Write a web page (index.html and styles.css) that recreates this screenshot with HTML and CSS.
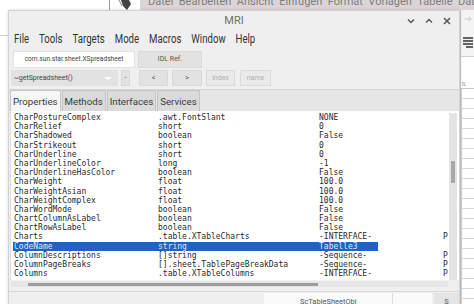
FILE: index.html
```html
<!DOCTYPE html>
<html>
<head>
<meta charset="utf-8">
<link rel="stylesheet" href="styles.css">
</head>
<body>
<div class="desktop">
  <div class="calc-top">
    <div class="calc-blank"></div>
    <div class="calc-icon">
      <svg width="16" height="10" viewBox="0 0 16 10"><path d="M4 0 L12 0 L14 4 L10 10 L6 6 Z" fill="#444"/><path d="M2 0 L5 6" stroke="#888" stroke-width="1"/></svg>
    </div>
    <div class="calc-menu"><span>Datei&nbsp;&nbsp;Bearbeiten&nbsp;&nbsp;Ansicht&nbsp;&nbsp;Einfügen&nbsp;&nbsp;Format&nbsp;&nbsp;Vorlagen&nbsp;&nbsp;Tabelle&nbsp;&nbsp;Daten</span></div>
  </div>
  <div class="calc-body">
    <div class="calc-left"></div>
    <div class="calc-mid"></div>
    <div class="calc-right">
      <div class="cr-arrow">➔</div>
      <div class="cr-icon">
        <svg width="10" height="12" viewBox="0 0 10 12"><path d="M0 1h10M0 4h10M0 7h10M3 10h7" stroke="#333" stroke-width="1.6"/></svg>
      </div>
      <div class="cr-box"></div>
      <div class="cr-sort">⇅</div>
      <div class="cr-grid"></div>
    </div>
  </div>

  <div class="mri">
    <div class="titlebar">
      <span class="title">MRI</span>
      <div class="winctl">
        <svg width="8" height="6" viewBox="0 0 8 6"><path d="M1 1.5 L4 4.5 L7 1.5" stroke="#555" stroke-width="1.4" fill="none"/></svg>
        <svg width="8" height="6" viewBox="0 0 8 6"><path d="M1 4.5 L4 1.5 L7 4.5" stroke="#555" stroke-width="1.4" fill="none"/></svg>
        <svg width="8" height="8" viewBox="0 0 8 8"><path d="M1 1 L7 7 M7 1 L1 7" stroke="#555" stroke-width="1.5"/></svg>
      </div>
    </div>
    <div class="menubar">
      <div class="menu-items">
        <span>File</span><span>Tools</span><span>Targets</span><span>Mode</span><span>Macros</span><span>Window</span><span>Help</span>
      </div>
    </div>
    <div class="row1">
      <div class="textbox">com.sun.star.sheet.XSpreadsheet</div>
      <div class="btn idl">IDL Ref.</div>
    </div>
    <div class="row2">
      <div class="combo"><span>~getSpreadsheet()</span><span class="tri"></span></div>
      <div class="btn minus">-</div>
      <div class="btn nav back">&lt;</div>
      <div class="btn nav fwd">&gt;</div>
      <div class="btn dis idx">index</div>
      <div class="btn dis nm">name</div>
    </div>
    <div class="tabs">
      <div class="tab active">Properties</div>
      <div class="tab">Methods</div>
      <div class="tab">Interfaces</div>
      <div class="tab">Services</div>
    </div>
    <div class="listwrap">
      <div class="list">
        <div class="r"><span>CharPostureComplex</span><span>.awt.FontSlant</span><span>NONE</span><span></span><span></span></div>
        <div class="r"><span>CharRelief</span><span>short</span><span>0</span><span></span><span></span></div>
        <div class="r"><span>CharShadowed</span><span>boolean</span><span>False</span><span></span><span></span></div>
        <div class="r"><span>CharStrikeout</span><span>short</span><span>0</span><span></span><span></span></div>
        <div class="r"><span>CharUnderline</span><span>short</span><span>0</span><span></span><span></span></div>
        <div class="r"><span>CharUnderlineColor</span><span>long</span><span>-1</span><span></span><span></span></div>
        <div class="r"><span>CharUnderlineHasColor</span><span>boolean</span><span>False</span><span></span><span></span></div>
        <div class="r"><span>CharWeight</span><span>float</span><span>100.0</span><span></span><span></span></div>
        <div class="r"><span>CharWeightAsian</span><span>float</span><span>100.0</span><span></span><span></span></div>
        <div class="r"><span>CharWeightComplex</span><span>float</span><span>100.0</span><span></span><span></span></div>
        <div class="r"><span>CharWordMode</span><span>boolean</span><span>False</span><span></span><span></span></div>
        <div class="r"><span>ChartColumnAsLabel</span><span>boolean</span><span>False</span><span></span><span></span></div>
        <div class="r"><span>ChartRowAsLabel</span><span>boolean</span><span>False</span><span></span><span></span></div>
        <div class="r"><span>Charts</span><span>.table.XTableCharts</span><span>-INTERFACE-</span><span></span><span>P</span></div>
        <div class="r sel"><span>CodeName</span><span>string</span><span>Tabelle3</span><span></span><span></span></div>
        <div class="r"><span>ColumnDescriptions</span><span>[]string</span><span>-Sequence-</span><span></span><span>P</span></div>
        <div class="r"><span>ColumnPageBreaks</span><span>[].sheet.TablePageBreakData</span><span>-Sequence-</span><span></span><span>P</span></div>
        <div class="r"><span>Columns</span><span>.table.XTableColumns</span><span>-INTERFACE-</span><span></span><span>P</span></div>
      </div>
      <div class="vscroll"><div class="vthumb"></div></div>
    </div>
    <div class="hscroll"><div class="hthumb"></div></div>
    <div class="bottom">
      <div class="st-spacer"></div>
      <div class="st-field main">ScTableSheetObj</div>
      <div class="st-field blank"></div>
      <div class="st-field s">S</div>
    </div>
  </div>
</div>
</body>
</html>
```

FILE: styles.css
```css
* { box-sizing: border-box; }
html, body { margin: 0; padding: 0; }
body { width: 474px; height: 304px; overflow: hidden; font-family: Roboto, "Noto Sans", sans-serif; background: #ffffff; }
.desktop { position: relative; width: 474px; height: 304px; overflow: hidden; }

.calc-top { display: flex; height: 10px; }
.calc-blank { width: 110px; background: #ffffff; border-right: 1px solid #9a9a9a; }
.calc-icon { width: 30px; background: #ffffff; display: flex; justify-content: center; align-items: flex-end; }
.calc-menu { flex: 1; background: #dcd5d8; color: #7d7d7d; font-size: 11px; white-space: nowrap; overflow: hidden; padding-left: 8px; }
.calc-menu span { display: block; line-height: 11px; margin-top: -4px; }

.calc-body { display: flex; height: 294px; }
.calc-left { width: 8px; background: #fff; background-image: linear-gradient(#cfcfcf, #cfcfcf); background-size: 8px 1px; background-position: 0 25px; background-repeat: no-repeat; }
.calc-mid { flex: 1; }
.calc-right { width: 14px; display: flex; flex-direction: column; background: #f4f4f4; border-left: 1px solid #c8c8c8; }
.cr-arrow { height: 18px; font-size: 10px; color: #d4d4d4; padding-left: 3px; line-height: 18px; }
.cr-icon { height: 28px; padding-left: 2px; padding-top: 6px; }
.cr-box { height: 24px; background: #fff; border-top: 1px solid #d0d0d0; }
.cr-sort { height: 8px; font-size: 6px; color: #999; line-height: 8px; background: #fff; }
.cr-grid { flex: 1; background-color: #fff; border-top: 1px solid #c8c8c8; background-image: repeating-linear-gradient(to bottom, transparent 0, transparent 9px, #d6d6d6 9px, #d6d6d6 10px), linear-gradient(to right, #d0d0d0 0, #d0d0d0 1px, transparent 1px); }

.mri { position: absolute; left: 8px; top: 10px; width: 452px; height: 300px; background: #efefef; border: 1px solid #d2d2d2; box-shadow: 0 0 3px rgba(0,0,0,0.15); display: flex; flex-direction: column; }

.titlebar { height: 18px; position: relative; display: flex; align-items: center; justify-content: center; }
.title { color: #707070; font-size: 11px; }
.winctl { position: absolute; right: 8px; top: 6px; display: flex; gap: 10px; align-items: center; }

.menubar { height: 20px; display: flex; align-items: center; padding-left: 5px; }
.menu-items { display: flex; gap: 12.5px; font-size: 12px; color: #333; transform: scaleX(0.8); transform-origin: left center; }

.row1 { height: 20px; display: flex; align-items: center; padding-left: 4px; gap: 3px; }
.textbox { width: 122px; height: 17px; background: #fff; border: 1px solid #e2e2e2; font-size: 6.6px; color: #444; display: flex; align-items: center; justify-content: center; white-space: nowrap; }
.btn { height: 16px; background: #e2e2e2; border: 1px solid #dadada; font-size: 7px; color: #555; display: flex; align-items: center; justify-content: center; }
.idl { width: 64px; height: 17px; }

.row2 { height: 18px; display: flex; align-items: center; padding-left: 2px; }
.combo { width: 107px; height: 16px; background: #e2e2e2; display: flex; align-items: center; justify-content: space-between; padding: 0 6px 0 3px; font-size: 7px; color: #444; }
.tri { width: 0; height: 0; border-left: 4px solid transparent; border-right: 4px solid transparent; border-top: 3px solid #ffffff; }
.minus { width: 9px; margin-left: 3px; }
.back { width: 29px; margin-left: 9px; }
.fwd { width: 30px; margin-left: 4px; }
.dis { color: #b0b0b0; background: #eaeaea; }
.idx { width: 29px; margin-left: 4px; }
.nm { width: 31px; margin-left: 5px; }

.tabs { height: 22px; margin-top: 2px; display: flex; align-items: flex-end; padding-left: 1px; border-top: 1px solid #d6d6d6; background: #e6e6e6; }
.tab { height: 21px; font-size: 9.7px; color: #3a3a3a; padding: 0 2px; display: flex; align-items: center; background: #dadada; border: 1px solid #c4c4c4; border-bottom: none; margin-right: 1px; }
.tab.active { background: #f6f6f6; }

.listwrap { height: 169px; display: flex; background: #fff; margin-left: 1px; border-left: 1px solid #dedede; }
.list { flex: 1; padding-top: 2px; padding-left: 2px; overflow: hidden; font-family: "DejaVu Sans Mono", monospace; font-size: 8px; color: #2a2a2a; }
.r { display: grid; grid-template-columns: 144px 161px 60px 64px 8px; height: 9.2px; line-height: 9.2px; white-space: nowrap; }
.r span { padding-left: 1px; overflow: hidden; }
.r.sel span:nth-child(-n+3) { background: #1c64c8; color: #dde8fb; }
.vscroll { width: 8px; background: #e4e4e4; margin: 2px 2px 0 0; position: relative; }
.vthumb { position: absolute; left: 2px; top: 48px; width: 4px; height: 22px; background: #a8a8a8; }

.hscroll { height: 7px; background: #e6e6e6; margin-left: 2px; margin-right: 11px; position: relative; border-top: 1px solid #f2f2f2; }
.hthumb { position: absolute; left: 17px; top: 2px; width: 290px; height: 3px; background: #9c9c9c; }

.bottom { flex: 1; display: flex; align-items: flex-start; border-top: 1px solid #d8d8d8; margin-top: 4px; padding-top: 1px; }
.st-spacer { width: 256px; }
.st-field { height: 16px; font-size: 7.5px; color: #555; display: flex; align-items: center; justify-content: center; }
.st-field.main { width: 128px; background: #fafafa; }
.st-field.blank { width: 40px; background: #fafafa; border-left: 1px solid #ddd; }
.st-field.s { width: 25px; background: #e4e4e4; margin-left: 2px; }
```
